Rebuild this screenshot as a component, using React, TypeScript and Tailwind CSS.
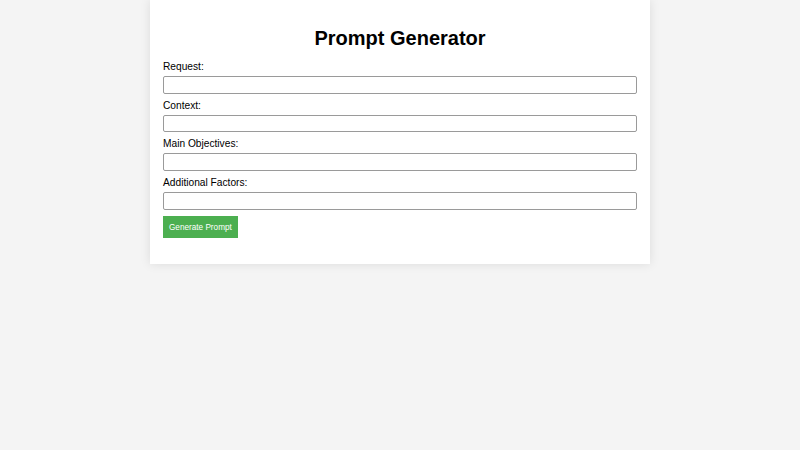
import React from 'react';

const fields = [
  { id: 'request', label: 'Request:' },
  { id: 'context', label: 'Context:' },
  { id: 'objectives', label: 'Main Objectives:' },
  { id: 'factors', label: 'Additional Factors:' },
];

const App: React.FC = () => {
  return (
    <div
      className="min-h-[450px] w-full bg-[#f4f4f4]"
      style={{ fontFamily: '"Liberation Sans", Arial, sans-serif' }}
    >
      <div className="mx-auto w-[500px] bg-white px-[13px] pt-[27px] pb-[26px] shadow-[0_0_10px_rgba(0,0,0,0.1)]">
        <h1 className="m-0 text-center text-[20px] leading-[23px] font-bold text-black">Prompt Generator</h1>
        <form className="mt-[11px]" onSubmit={(e) => e.preventDefault()}>
          {fields.map((field) => (
            <div key={field.id} className="mb-[6px]">
              <label htmlFor={field.id} className="mb-[3px] block text-[10.2px] leading-[12px] text-black">
                {field.label}
              </label>
              <input
                id={field.id}
                type="text"
                className="block h-[17.67px] w-full rounded-[2px] border border-[#9a9a9a] bg-white px-1 text-[10px] outline-none"
              />
            </div>
          ))}
          <button
            type="submit"
            className="flex h-[22px] items-center bg-[#4caf50] px-[6px] pt-[2px] text-[8.2px] leading-[10px] text-white"
          >
            Generate Prompt
          </button>
        </form>
      </div>
    </div>
  );
};

export default App;
